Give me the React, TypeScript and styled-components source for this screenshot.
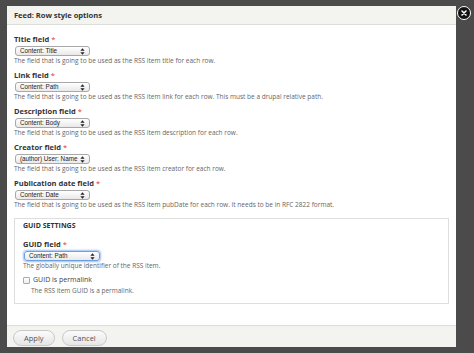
import React from "react";
import styled, { createGlobalStyle } from "styled-components";

const GlobalStyle = createGlobalStyle`
  html, body {
    margin: 0;
    padding: 0;
    background: #4b4b4b;
  }
  body {
    font-family: "Open Sans", "DejaVu Sans", sans-serif;
  }
`;

interface FieldProps {
  label: string;
  value: string;
  description: string;
}

const fields: FieldProps[] = [
  {
    label: "Title field",
    value: "Content: Title",
    description: "The field that is going to be used as the RSS item title for each row.",
  },
  {
    label: "Link field",
    value: "Content: Path",
    description:
      "The field that is going to be used as the RSS item link for each row. This must be a drupal relative path.",
  },
  {
    label: "Description field",
    value: "Content: Body",
    description: "The field that is going to be used as the RSS item description for each row.",
  },
  {
    label: "Creator field",
    value: "(author) User: Name",
    description: "The field that is going to be used as the RSS item creator for each row.",
  },
  {
    label: "Publication date field",
    value: "Content: Date",
    description:
      "The field that is going to be used as the RSS item pubDate for each row. It needs to be in RFC 2822 format.",
  },
];

const SelectArrows = () => (
  <svg width="5" height="7" viewBox="0 0 5 7">
    <path d="M2.5 0.3 L4.6 2.8 L0.4 2.8 Z" fill="#222" />
    <path d="M2.5 6.7 L4.6 4.2 L0.4 4.2 Z" fill="#222" />
  </svg>
);

const Select = (props: { value: string; focused?: boolean }) => (
  <SelectBox $focused={props.focused}>
    <SelectText>{props.value}</SelectText>
    <SelectArrows />
  </SelectBox>
);

const FormItem = (props: FieldProps) => (
  <Item>
    <Label>
      {props.label} <Required>*</Required>
    </Label>
    <Select value={props.value} />
    <Description>{props.description}</Description>
  </Item>
);

const App = () => {
  return (
    <Page>
      <GlobalStyle />
      <Dialog>
        <Header>Feed: Row style options</Header>
        <CloseButton>
          <svg width="10" height="10" viewBox="0 0 10 10">
            <path d="M3 3 L7 7 M7 3 L3 7" stroke="#fff" strokeWidth="1.6" strokeLinecap="round" />
          </svg>
        </CloseButton>
        <Body>
          {fields.map((f) => (
            <FormItem key={f.label} {...f} />
          ))}
          <Fieldset>
            <Legend>GUID SETTINGS</Legend>
            <Item>
              <Label>
                GUID field <Required>*</Required>
              </Label>
              <Select value="Content: Path" focused />
              <Description>The globally unique identifier of the RSS item.</Description>
            </Item>
            <CheckRow>
              <CheckBox />
              <CheckLabel>GUID is permalink</CheckLabel>
            </CheckRow>
            <CheckDescription>The RSS item GUID is a permalink.</CheckDescription>
          </Fieldset>
        </Body>
        <Footer>
          <Button>Apply</Button>
          <Button>Cancel</Button>
        </Footer>
      </Dialog>
    </Page>
  );
};

const Page = styled.div`
  width: 474px;
  height: 353px;
  box-sizing: border-box;
  padding: 6px 18px 6px 7px;
`;

const Dialog = styled.div`
  position: relative;
  width: 449px;
  height: 341px;
  background: #ffffff;
  display: flex;
  flex-direction: column;
`;

const Header = styled.div`
  height: 18px;
  line-height: 18px;
  background: #f3f3ef;
  border-bottom: 1px solid #dcdcd8;
  padding-left: 7px;
  font-size: 7.6px;
  font-weight: 700;
  letter-spacing: -0.05px;
  color: #333;
`;

const CloseButton = styled.div`
  position: absolute;
  top: 0px;
  left: 450px;
  width: 12px;
  height: 12px;
  border-radius: 50%;
  background: #111;
  border: 1px solid #fff;
  display: flex;
  align-items: center;
  justify-content: center;
`;

const Body = styled.div`
  padding: 9px 7px 0 7px;
`;

const Item = styled.div`
  margin-bottom: 4px;
`;

const Label = styled.div`
  font-size: 7.5px;
  line-height: 11px;
  font-weight: 700;
  color: #333;
  margin-bottom: 1px;
`;

const Required = styled.span`
  color: #d33;
  font-weight: 400;
`;

const SelectBox = styled.div<{ $focused?: boolean }>`
  width: ${(p) => (p.$focused ? "76px" : "75px")};
  height: 10px;
  margin-left: 1px;
  padding: 0 4px 0 4px;
  display: flex;
  align-items: center;
  justify-content: space-between;
  box-sizing: border-box;
  border: 1px solid ${(p) => (p.$focused ? "#6c9ee4" : "#a8a8a8")};
  border-radius: 3px;
  background: linear-gradient(#ffffff, #e9e9e9);
  box-shadow: ${(p) => (p.$focused ? "0 0 2px 1px #9cc0f2" : "none")};
`;

const SelectText = styled.span`
  font-family: "Liberation Sans", Arial, sans-serif;
  font-size: 6.3px;
  line-height: 8px;
  color: #222;
  white-space: nowrap;
`;

const Description = styled.div`
  font-size: 6.5px;
  line-height: 10px;
  color: #666;
`;

const Fieldset = styled.div`
  margin-top: 8px;
  border: 1px solid #dedede;
  padding: 2px 7px 7px 8px;
`;

const Legend = styled.div`
  font-size: 7px;
  line-height: 10px;
  font-weight: 700;
  color: #333;
  margin-bottom: 8px;
`;

const CheckRow = styled.div`
  display: flex;
  align-items: center;
  gap: 3px;
  height: 10px;
  margin-top: 1px;
`;

const CheckBox = styled.span`
  width: 5px;
  height: 5px;
  border: 1px solid #aaa;
  border-radius: 1px;
  background: linear-gradient(#fff, #eee);
`;

const CheckLabel = styled.span`
  font-size: 7px;
  line-height: 10px;
  color: #444;
`;

const CheckDescription = styled(Description)`
  padding-left: 8px;
  margin-top: 1px;
`;

const Footer = styled.div`
  margin-top: auto;
  height: 21px;
  background: #f3f3ef;
  border-top: 1px solid #dcdcd8;
  display: flex;
  align-items: center;
  gap: 7px;
  padding-left: 6px;
`;

const Button = styled.div`
  height: 14px;
  padding: 0 10px;
  margin-top: 2px;
  border: 1px solid #c9c9c9;
  border-radius: 8px;
  background: linear-gradient(#fbfbfb, #e6e6e6);
  font-size: 7.5px;
  line-height: 14px;
  color: #555;
  text-align: center;
`;

export default App;
